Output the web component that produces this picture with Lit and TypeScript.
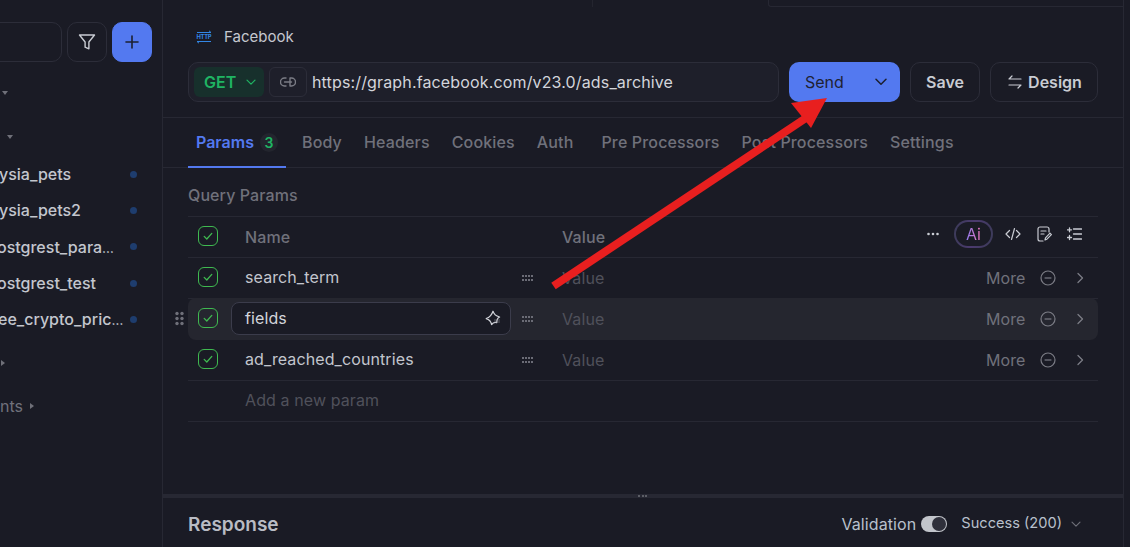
import { LitElement, html, css, svg } from "lit";
import { customElement } from "lit/decorators.js";

const check = html`<span class="check"><svg width="12" height="12" viewBox="0 0 12 12" fill="none" stroke="#3fb950" stroke-width="1.3" stroke-linecap="round" stroke-linejoin="round"><path d="M2.2 6.4 4.8 9 9.8 3.4"/></svg></span>`;
const grip = html`<svg class="grip" width="14" height="10" viewBox="0 0 14 10" fill="#6b6c76"><path d="M1 2h2v2H1zM4 2h2v2H4zM7 2h2v2H7zM10 2h2v2h-2zM1 6h2v2H1zM4 6h2v2H4zM7 6h2v2H7zM10 6h2v2h-2z"/></svg>`;
const minus = html`<svg width="16" height="16" viewBox="0 0 16 16" fill="none" stroke="#7b7c85" stroke-width="1.2"><circle cx="8" cy="8" r="7"/><path d="M4.6 8h6.8"/></svg>`;
const chev = html`<svg width="10" height="12" viewBox="0 0 10 12" fill="none" stroke="#7b7c85" stroke-width="1.3" stroke-linecap="round" stroke-linejoin="round"><path d="M3 1.5 7.5 6 3 10.5"/></svg>`;
const tri = (cls: string) => html`<span class=${cls}></span>`;

const items = [
  { cls: "s1", text: "ysia_pets", ell: false },
  { cls: "s1", text: "ysia_pets2", ell: false },
  { cls: "s3", text: "ostgrest_para", ell: true },
  { cls: "s3", text: "ostgrest_test", ell: false },
  { cls: "s2", text: "ee_crypto_pric", ell: true },
];

@customElement("app-root")
export class AppRoot extends LitElement {
  static styles = css`
    :host { display: block; width: 1130px; height: 547px; position: relative; overflow: hidden; background: #1a1b25; color: #c9ccd3; font-family: Inter, "Noto Sans", sans-serif; font-size: 16px; }
    * { box-sizing: border-box; }
    .app { display: flex; height: 547px; }
    .side { width: 163px; flex: none; border-right: 1px solid #272833; overflow: hidden; }
    .searchrow { display: flex; gap: 5px; margin: 22px 0 0 0; height: 40px; }
    .search { width: 72px; margin-left: -10px; flex: none; border: 1px solid #2c2d39; border-radius: 10px; }
    .iconbtn { width: 40px; height: 40px; flex: none; border: 1px solid #2c2d39; border-radius: 10px; display: flex; align-items: center; justify-content: center; }
    .plus { background: #5379f0; border-color: #5379f0; }
    .folder { height: 44px; display: flex; align-items: center; color: #70717b; font-size: 16px; }
    .down { width: 0; height: 0; border-left: 3.5px solid transparent; border-right: 3.5px solid transparent; border-top: 4px solid #6f7079; }
    .right { width: 0; height: 0; border-top: 3.5px solid transparent; border-bottom: 3.5px solid transparent; border-left: 4px solid #6f7079; }
    .f1 { margin-top: 9px; padding-left: 2px; }
    .f2 { padding-left: 7px; }
    .items { margin-top: -3px; }
    .item { height: 36.3px; display: flex; align-items: center; justify-content: space-between; padding-right: 25px; font-weight: 500; color: #c3c6ce; white-space: nowrap; font-size: 16px; }
    .s1 { margin-left: -1px; }
    .s2 { margin-left: -2px; }
    .s3 { margin-left: -3px; }
    .ell { font-size: 13px; }
    .dot { width: 7px; height: 7px; border-radius: 50%; background: #1e3d6e; flex: none; }
    .f3 { margin-top: 4px; padding-left: 1px; height: 43px; }
    .f4 { height: 43px; gap: 7px; }

    .main { width: 961px; flex: none; border-right: 1px solid #272833; display: flex; flex-direction: column; }
    .strip { height: 7px; display: flex; justify-content: space-between; flex: none; }
    .sa { width: 430px; border-right: 1px solid #24252f; }
    .sb { width: 355px; border-left: 1px solid #272833; border-bottom: 1px solid #272833; border-bottom-left-radius: 3px; }
    .req { height: 111px; flex: none; padding: 0 25px; border-bottom: 1px solid #272833; }
    .title { height: 55px; display: flex; align-items: center; gap: 12px; padding: 4px 0 0 8px; font-size: 15px; color: #c5c8cf; }
    .urlrow { display: flex; gap: 10px; height: 40px; }
    .url { width: 591px; border: 1px solid #2c2d39; border-radius: 10px; background: #1e1f2a; display: flex; align-items: center; padding: 0 5px; }
    .get { width: 70px; height: 30px; background: #17302c; border-radius: 6px; display: flex; align-items: center; gap: 10px; padding-left: 10px; color: #1fb463; font-weight: 600; font-size: 16px; }
    .link { width: 38px; height: 30px; margin-left: 5px; border: 1px solid #2c2d39; border-radius: 6px; display: flex; align-items: center; justify-content: center; }
    .urltext { margin-left: 5px; font-size: 16px; color: #d3d5db; letter-spacing: .145px; }
    .send { width: 111px; background: #5379f0; border-radius: 10px; display: flex; align-items: center; justify-content: space-between; padding: 0 13px 0 16px; color: #1f2233; font-size: 16px; }
    .btn { border: 1px solid #2c2d39; border-radius: 10px; display: flex; align-items: center; justify-content: center; gap: 6px; color: #c9ccd3; font-weight: 600; font-size: 16px; }
    .save { width: 70px; }
    .design { width: 108px; padding-left: 2px; }
    .tabs { height: 50px; flex: none; display: flex; border-bottom: 1px solid #272833; padding-left: 25px; }
    .tab { display: flex; align-items: center; height: 49px; padding: 0 8px 2px; color: #70717b; font-weight: 500; font-size: 16px; letter-spacing: .15px; margin-right: 6px; white-space: nowrap; }
    .tab.auth { margin-right: 12px; }
    .tab.on { color: #5379f0; font-weight: 600; letter-spacing: 0; height: 50px; padding-bottom: 0; border-bottom: 2px solid #5379f0; width: 98px; margin-right: 8px; gap: 6px; }
    .badge { width: 19px; height: 19px; border-radius: 50%; background: #23252e; color: #1fb463; font-size: 14px; font-weight: 600; display: flex; align-items: center; justify-content: center; }
    .body { flex: 1; padding: 0 25px; }
    .qp { height: 49px; display: flex; align-items: center; padding: 6px 0 0 0; color: #70717b; font-size: 16px; font-weight: 500; letter-spacing: .1px; border-bottom: 1px solid #272833; }
    .row { height: 41px; display: grid; grid-template-columns: 43px 280px 51px 1fr auto; align-items: center; border-bottom: 1px solid #272833; position: relative; font-size: 16px; letter-spacing: .1px; padding-bottom: 2px; }
    .row.hot { background: #25262f; border-radius: 8px; border-bottom: none; height: 42px; margin-top: -1px; z-index: 1; padding-bottom: 2px; }
    .row > .check { margin-left: 10px; }
    .check { width: 20px; height: 20px; border: 1px solid #3fb950; border-radius: 6px; display: flex; align-items: center; justify-content: center; }
    .name { padding-left: 14px; color: #c3c6ce; }
    .name.head { color: #70717b; font-weight: 500; margin-top: 2px; }
    .name.add { color: #50515b; }
    .input { height: 33px; background: #1a1b25; border: 1px solid #3b3c4b; border-radius: 8px; padding: 0 9px 0 13px; display: flex; align-items: center; justify-content: space-between; color: #d3d5db; }
    .grip { margin-left: 10px; margin-top: 2px; display: block; }
    .val { color: #50515b; margin-top: 2px; }
    .val.head { color: #70717b; font-weight: 500; }
    .acts { display: flex; align-items: center; color: #70717b; width: 112px; margin-top: 2px; }
    .acts svg:nth-of-type(1) { margin-left: 14px; }
    .acts svg:nth-of-type(2) { margin-left: 19px; }
    .handle { position: absolute; left: -13px; top: 13px; }
    .tools { display: flex; align-items: center; width: 172px; padding-bottom: 5px; }
    .ai { width: 39px; height: 28px; margin: 0 12px 0 14px; padding: 2px; border-radius: 14px; background: linear-gradient(100deg,#3b3b58,#4b3a6e 50%,#3b3b58); }
    .ai span { display: flex; width: 100%; height: 100%; border-radius: 12px; background: #1a1b25; align-items: center; justify-content: center; }
    .ai em { font-style: normal; font-size: 16px; background: linear-gradient(90deg,#8f7bf0,#ec74b8); -webkit-background-clip: text; background-clip: text; color: transparent; }
    .tools .ti { margin-right: 15px; display: block; }
    .tools .dots, .tools .last { margin-right: 0; }
    .split { height: 4px; flex: none; background: #272833; display: flex; justify-content: center; align-items: center; gap: 1.5px; padding-right: 1px; }
    .split i { width: 2px; height: 2px; background: #6f7079; border-radius: 50%; }
    .resp { height: 49px; flex: none; display: flex; align-items: center; padding: 3px 25px 0; }
    .resp b { font-size: 19px; font-weight: 600; color: #b9bcc4; flex: 1; }
    .val2 { font-size: 16px; letter-spacing: .1px; color: #b8c0cc; }
    .toggle { width: 26px; height: 16px; border-radius: 8px; background: #c2c5cb; margin: 0 14px 0 5px; display: flex; align-items: center; justify-content: flex-end; padding-right: 1px; }
    .toggle i { width: 14px; height: 14px; border-radius: 50%; background: #2f303b; }
    .succ { font-size: 14.6px; color: #b8c0cc; margin-right: 9px; margin-top: -2px; }
    .respchev { margin-right: 17px; }
    .arrow { position: absolute; left: 0; top: 0; pointer-events: none; }
  `;

  renderRow(name: string, hot = false) {
    return html`<div class="row ${hot ? "hot" : ""}">
      ${hot ? html`<svg class="handle" width="9" height="15" viewBox="0 0 9 15" fill="#6f7079"><circle cx="2" cy="2.5" r="1.7"/><circle cx="7" cy="2.5" r="1.7"/><circle cx="2" cy="7.5" r="1.7"/><circle cx="7" cy="7.5" r="1.7"/><circle cx="2" cy="12.5" r="1.7"/><circle cx="7" cy="12.5" r="1.7"/></svg>` : ""}
      ${check}
      ${hot
        ? html`<div class="input"><span>${name}</span><svg width="16" height="16" viewBox="0 0 16 16" fill="none"><path d="M8 1.2C8.8 4.4 10.6 6 14.6 7 12 8.4 11.6 10 11.8 12.6 9.6 12 8 12.4 6.6 14.6 6 11.6 4.6 9.6 1.2 8.6 4.4 7.4 6.6 5.4 8 1.2z" stroke="#d3d5db" stroke-width="1.2" stroke-linejoin="round"/><path d="M9.5 9.5h1v1h-1zM11.5 9.5h1v1h-1zM13.5 9.5h1v1h-1zM9.5 11.5h1v1h-1zM11.5 11.5h1v1h-1zM13.5 11.5h1v1h-1z" fill="#9a9ba5"/></svg></div>`
        : html`<div class="name">${name}</div>`}
      ${grip}
      <div class="val">Value</div>
      <div class="acts"><span>More</span>${minus}${chev}</div>
    </div>`;
  }

  render() {
    return html`<div class="app">
      <aside class="side">
        <div class="searchrow">
          <div class="search"></div>
          <div class="iconbtn"><svg width="18" height="18" viewBox="0 0 18 18" fill="none" stroke="#c9ccd3" stroke-width="1.4" stroke-linejoin="round"><path d="M1.5 2h15l-5.6 7v6.8l-3.8-1.6V9z"/></svg></div>
          <div class="iconbtn plus"><svg width="14" height="14" viewBox="0 0 14 14" fill="none" stroke="#1c2030" stroke-width="1.6" stroke-linecap="round"><path d="M7 1v12M1 7h12"/></svg></div>
        </div>
        <div class="folder f1">${tri("down")}</div>
        <div class="folder f2">${tri("down")}</div>
        <div class="items">
          ${items.map(
            (t) => html`<div class="item ${t.cls}"><span>${t.text}${t.ell ? html`<span class="ell">…</span>` : ""}</span><span class="dot"></span></div>`
          )}
        </div>
        <div class="folder f3">${tri("right")}</div>
        <div class="folder f4"><span>nts</span>${tri("right")}</div>
      </aside>
      <main class="main">
        <div class="strip"><div class="sa"></div><div class="sb"></div></div>
        <section class="req">
          <div class="title">
            <svg width="16" height="14" viewBox="0 0 16 14" fill="none" stroke="#3387e6" stroke-width="1"><path d="M1 2.5h14M13 .8l2 1.7M1 11.5h14M3 13.2 1 11.5"/><text x="0.5" y="9.2" font-size="5.8" font-weight="700" fill="#3387e6" stroke="none" font-family="Inter" textLength="15">HTTP</text></svg>
            <span>Facebook</span>
          </div>
          <div class="urlrow">
            <div class="url">
              <div class="get"><span>GET</span><svg width="10" height="7" viewBox="0 0 10 7" fill="none" stroke="#1fb463" stroke-width="1.2" stroke-linecap="round" stroke-linejoin="round"><path d="M1 1.2 5 5.2 9 1.2"/></svg></div>
              <div class="link"><svg width="16" height="10" viewBox="0 0 16 10" fill="none" stroke="#7b7c85" stroke-width="1.4" stroke-linecap="round"><path d="M6 1H4.5a4 4 0 0 0 0 8H6M10 1h1.5a4 4 0 0 1 0 8H10M4.5 5h7M10 1v8"/></svg></div>
              <span class="urltext">https://graph.facebook.com/v23.0/ads_archive</span>
            </div>
            <div class="send"><span>Send</span><svg width="12" height="8" viewBox="0 0 12 8" fill="none" stroke="#1c2030" stroke-width="1.5" stroke-linecap="round" stroke-linejoin="round"><path d="M1 1.2 6 6.2l5-5"/></svg></div>
            <div class="btn save">Save</div>
            <div class="btn design"><svg width="14" height="14" viewBox="0 0 14 14" fill="none" stroke="#c9ccd3" stroke-width="1.2" stroke-linecap="round" stroke-linejoin="round"><path d="M13 4H1l3-3M1 10h12l-3 3"/></svg>Design</div>
          </div>
        </section>
        <nav class="tabs">
          <div class="tab on"><span>Params</span><span class="badge">3</span></div>
          ${["Body", "Headers", "Cookies", "Auth", "Pre Processors", "Post Processors", "Settings"].map(
            (t) => html`<div class="tab ${t === "Auth" ? "auth" : ""}">${t}</div>`
          )}
        </nav>
        <section class="body">
          <div class="qp">Query Params</div>
          <div class="row">
            ${check}
            <div class="name head">Name</div>
            <span></span>
            <div class="val head">Value</div>
            <div class="tools">
              <svg class="ti dots" width="14" height="4" viewBox="0 0 14 4" fill="#c9ccd3"><circle cx="2.5" cy="2" r="1.3"/><circle cx="7" cy="2" r="1.3"/><circle cx="11.5" cy="2" r="1.3"/></svg>
              <div class="ai"><span><em>Ai</em></span></div>
              <svg class="ti" width="16" height="14" viewBox="0 0 16 14" fill="none" stroke="#c9ccd3" stroke-width="1.2" stroke-linecap="round" stroke-linejoin="round"><path d="M4.5 3.5 1 7l3.5 3.5M11.5 3.5 15 7l-3.5 3.5M9.5 1.5l-3 11"/></svg>
              <svg class="ti" width="16" height="16" viewBox="0 0 16 16" fill="none" stroke="#c9ccd3" stroke-width="1.2" stroke-linecap="round" stroke-linejoin="round"><path d="M13 6V3a2 2 0 0 0-2-2H4a2 2 0 0 0-2 2v10a2 2 0 0 0 2 2h3M5 5h5M5 8h3M9 14l.5-2.2L14 7.2l1.4 1.4-4.5 4.6z"/></svg>
              <svg class="ti last" width="15" height="14" viewBox="0 0 15 14" fill="none" stroke="#c9ccd3" stroke-width="1.3" stroke-linecap="round"><path d="M2.5 .8v4M.5 2.8h4M.5 10.5h4M6.5 2h8M6.5 7h8M6.5 12h8M2.5 8.5v4"/></svg>
            </div>
          </div>
          ${this.renderRow("search_term")}
          ${this.renderRow("fields", true)}
          ${this.renderRow("ad_reached_countries")}
          <div class="row"><span></span><div class="name add">Add a new param</div></div>
        </section>
        <div class="split"><i></i><i></i><i></i></div>
        <section class="resp">
          <b>Response</b>
          <span class="val2">Validation</span>
          <span class="toggle"><i></i></span>
          <span class="succ">Success (200)</span>
          <svg class="respchev" width="10" height="7" viewBox="0 0 10 7" fill="none" stroke="#6f7079" stroke-width="1.1" stroke-linecap="round" stroke-linejoin="round"><path d="M1 1.2 5 5.2 9 1.2"/></svg>
        </section>
      </main>
    </div>
    <svg class="arrow" width="1130" height="547" viewBox="0 0 1130 547">
      ${svg`<path d="M553.5 286 806 118" stroke="#e81f1f" stroke-width="8" fill="none"/><path d="M827 98 791 103 811 128z" fill="#e81f1f"/>`}
    </svg>`;
  }
}
